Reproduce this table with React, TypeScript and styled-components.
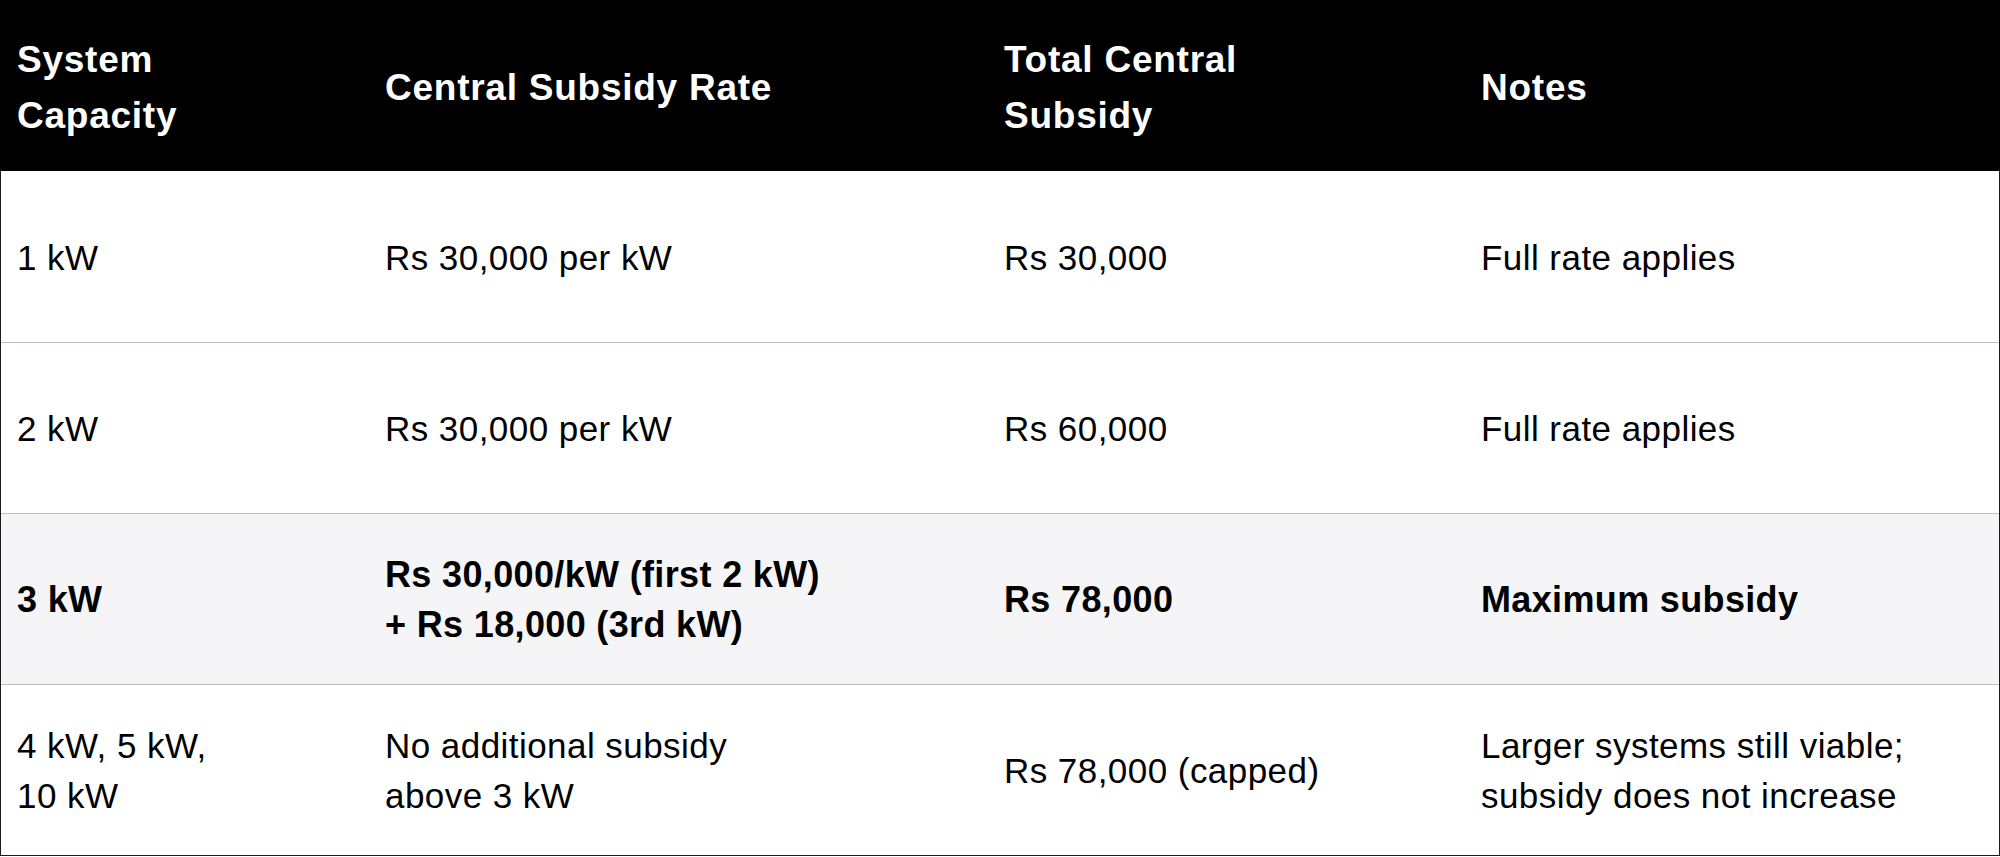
import React from "react";
import styled, { createGlobalStyle } from "styled-components";

const GlobalStyle = createGlobalStyle`
  html, body {
    margin: 0;
    padding: 0;
    background: #ffffff;
  }
  body {
    font-family: "Liberation Sans", Arial, Helvetica, sans-serif;
    color: #000;
  }
`;

const Table = styled.div`
  width: 2000px;
  box-sizing: border-box;
  border-left: 1px solid #1c1c1c;
  border-right: 1px solid #1c1c1c;
  border-bottom: 1px solid #1c1c1c;
  display: flex;
  flex-direction: column;
`;

const columns = "368px 619px 477px 1fr";

const HeaderRow = styled.div`
  display: grid;
  grid-template-columns: ${columns};
  height: 171px;
  box-sizing: border-box;
  background: #000;
  color: #fff;
  margin: 0 -1px;
  padding: 5px 1px 0;
`;

const HeaderCell = styled.div`
  display: flex;
  align-items: center;
  padding: 0 16px;
  font-size: 37px;
  line-height: 56px;
  font-weight: 700;
  letter-spacing: 0.75px;
`;

const Row = styled.div<{ $highlight?: boolean; $first?: boolean }>`
  display: grid;
  grid-template-columns: ${columns};
  height: ${(p) => (p.$first ? "171px" : "170px")};
  box-sizing: content-box;
  border-top: ${(p) => (p.$first ? "none" : "1px solid #bdbdc5")};
  background: ${(p) => (p.$highlight ? "#f5f5f7" : "#ffffff")};
`;

const Cell = styled.div<{ $bold?: boolean }>`
  display: flex;
  align-items: center;
  padding: 2px 16px 0;
  font-size: ${(p) => (p.$bold ? "36px" : "35px")};
  line-height: 50px;
  font-weight: ${(p) => (p.$bold ? 700 : 400)};
  letter-spacing: ${(p) => (p.$bold ? "0.35px" : "0.45px")};
  color: #000;
`;

const CellText = styled.span`
  display: block;
`;

type RowData = {
  cells: React.ReactNode[];
  highlight?: boolean;
};

const headers: React.ReactNode[] = [
  <>System<br />Capacity</>,
  "Central Subsidy Rate",
  <>Total Central<br />Subsidy</>,
  "Notes",
];

const rows: RowData[] = [
  { cells: ["1 kW", "Rs 30,000 per kW", "Rs 30,000", "Full rate applies"] },
  { cells: ["2 kW", "Rs 30,000 per kW", "Rs 60,000", "Full rate applies"] },
  {
    highlight: true,
    cells: [
      "3 kW",
      <>Rs 30,000/kW (first 2 kW)<br />+ Rs 18,000 (3rd kW)</>,
      "Rs 78,000",
      "Maximum subsidy",
    ],
  },
  {
    cells: [
      <>4 kW, 5 kW,<br />10 kW</>,
      <>No additional subsidy<br />above 3 kW</>,
      "Rs 78,000 (capped)",
      <>Larger systems still viable;<br />subsidy does not increase</>,
    ],
  },
];

export default function App() {
  return (
    <>
      <GlobalStyle />
      <Table>
        <HeaderRow>
          {headers.map((h, i) => (
            <HeaderCell key={i}>
              <CellText>{h}</CellText>
            </HeaderCell>
          ))}
        </HeaderRow>
        {rows.map((r, ri) => (
          <Row key={ri} $first={ri === 0} $highlight={r.highlight}>
            {r.cells.map((c, ci) => (
              <Cell key={ci} $bold={r.highlight}>
                <CellText>{c}</CellText>
              </Cell>
            ))}
          </Row>
        ))}
      </Table>
    </>
  );
}
